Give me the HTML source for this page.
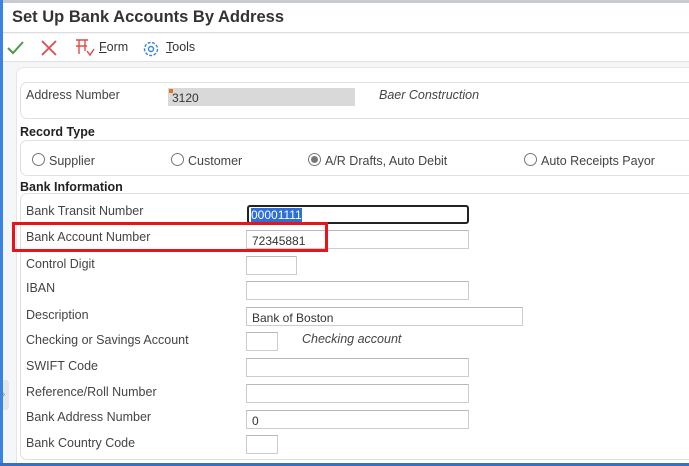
<!DOCTYPE html><html style="width:689px;height:466px;overflow:hidden"><head><style>
*{box-sizing:border-box;margin:0;padding:0}
body{width:689px;height:466px;overflow:hidden;background:#f5f6f7;font-family:"Liberation Sans",Arial,sans-serif;font-size:12.5px;color:#333;position:relative}
.a{position:absolute}
.lbl{position:absolute;left:26px;color:#444}
.in{position:absolute;background:#fff;border:1px solid #c9cdd2;border-top-color:#b5b9be;height:19px;font-size:12px;padding:3px 0 0 5px;color:#333}
.box{position:absolute;border:1px solid #dde1e5;border-radius:7px;background:#fff}
.rad{position:absolute;width:13px;height:13px;border:1px solid #777;border-radius:50%;background:#fff}
h3{position:absolute;left:20px;font-size:12.5px;font-weight:bold;color:#222}
</style></head><body>
<div class="a" style="left:0;top:0;width:689px;height:3px;background:#c8cbcf"></div>
<div class="a" style="left:3px;top:3px;width:686px;height:30px;background:#fff;border-bottom:1px solid #dcdcdc"></div>
<div class="a" style="left:12px;top:8px;font-size:16.5px;font-weight:bold;color:#333">Set Up Bank Accounts By Address</div>
<div class="a" style="left:3px;top:34px;width:686px;height:28px;background:#fff;border-bottom:1px solid #e2e2e2"></div>
<svg class="a" style="left:6px;top:39px" width="20" height="18"><path d="M2 9 L7 14 L17 3" stroke="#4a9a4a" stroke-width="2" fill="none"/></svg>
<svg class="a" style="left:40px;top:39px" width="18" height="18"><path d="M2 2 L16 16 M16 2 L2 16" stroke="#e04a4a" stroke-width="1.8"/></svg>
<svg class="a" style="left:74px;top:38px" width="22" height="20"><path d="M2 2 H14 M5 2 V16 M2 8 H13 M11 2 V13 M13 13 L16 17 L20 11" stroke="#e04a4a" stroke-width="1.4" fill="none"/></svg>
<div class="a" style="left:99px;top:40px;color:#333"><u>F</u>orm</div>
<svg class="a" style="left:142px;top:40px" width="18" height="18"><circle cx="9" cy="9" r="6.5" stroke="#3a83e0" stroke-width="1.4" fill="none" stroke-dasharray="3 1.5"/><circle cx="9" cy="9" r="2.5" stroke="#3a83e0" stroke-width="1.4" fill="none"/></svg>
<div class="a" style="left:166px;top:40px;color:#333"><u>T</u>ools</div>
<div class="a" style="left:16px;top:67px;width:700px;height:396px;background:#fff;border:1px solid #e4e6e8;border-radius:8px 0 0 0;border-bottom:none"></div>
<div class="box" style="left:20px;top:82px;width:700px;height:37px"></div>
<div class="lbl" style="top:88px">Address Number</div>
<div class="a" style="left:168px;top:88px;width:187px;height:18px;background:#d9d9d9;padding:3px 0 0 4px;font-size:12px">3120</div>
<div class="a" style="left:169px;top:89px;width:4px;height:4px;background:#e8731e"></div>
<div class="a" style="left:379px;top:88px;font-style:italic;color:#444">Baer Construction</div>
<h3 style="top:125px">Record Type</h3>
<div class="box" style="left:20px;top:140px;width:700px;height:36px"></div>
<div class="rad" style="left:32px;top:153px"></div><div class="a" style="left:49px;top:154px;color:#444">Supplier</div>
<div class="rad" style="left:171px;top:153px"></div><div class="a" style="left:188px;top:154px;color:#444">Customer</div>
<div class="rad" style="left:308px;top:153px"><div class="a" style="left:2px;top:2px;width:7px;height:7px;border-radius:50%;background:#777"></div></div><div class="a" style="left:325px;top:154px;color:#444">A/R Drafts, Auto Debit</div>
<div class="rad" style="left:524px;top:153px"></div><div class="a" style="left:541px;top:154px;color:#444">Auto Receipts Payor</div>
<h3 style="top:180px">Bank Information</h3>
<div class="box" style="left:20px;top:193px;width:700px;height:267px"></div>
<div class="lbl" style="top:204px">Bank Transit Number</div>
<div class="in" style="left:247px;top:205px;width:222px;border:2px solid #222;border-radius:3px;padding:1px 0 0 2px"><span style="background:#2f6fd6;color:#fff">00001111</span></div>
<div class="lbl" style="top:230px">Bank Account Number</div>
<div class="in" style="left:246px;top:230px;width:223px">72345881</div>
<div class="lbl" style="top:257px">Control Digit</div>
<div class="in" style="left:246px;top:256px;width:51px"></div>
<div class="lbl" style="top:281px">IBAN</div>
<div class="in" style="left:246px;top:281px;width:223px"></div>
<div class="lbl" style="top:308px">Description</div>
<div class="in" style="left:246px;top:307px;width:277px">Bank of Boston</div>
<div class="lbl" style="top:333px">Checking or Savings Account</div>
<div class="in" style="left:246px;top:332px;width:32px"></div>
<div class="a" style="left:302px;top:332px;font-style:italic;color:#444">Checking account</div>
<div class="lbl" style="top:359px">SWIFT Code</div>
<div class="in" style="left:246px;top:358px;width:223px"></div>
<div class="lbl" style="top:385px">Reference/Roll Number</div>
<div class="in" style="left:246px;top:384px;width:223px"></div>
<div class="lbl" style="top:410px">Bank Address Number</div>
<div class="in" style="left:246px;top:410px;width:223px">0</div>
<div class="lbl" style="top:436px">Bank Country Code</div>
<div class="in" style="left:246px;top:435px;width:32px"></div>
<div class="a" style="left:12px;top:222px;width:316px;height:30px;border:3px solid #e8141c"></div>
<div class="a" style="left:2px;top:380px;width:7px;height:30px;background:#e4e6e8;border-radius:0 3px 3px 0;color:#888;font-size:10px;line-height:30px">›</div>
<div class="a" style="left:0;top:0;width:3px;height:466px;background:#3a83e0"></div>
<div class="a" style="left:0;top:463px;width:689px;height:3px;background:#3a6fc0"></div>
</body></html>
